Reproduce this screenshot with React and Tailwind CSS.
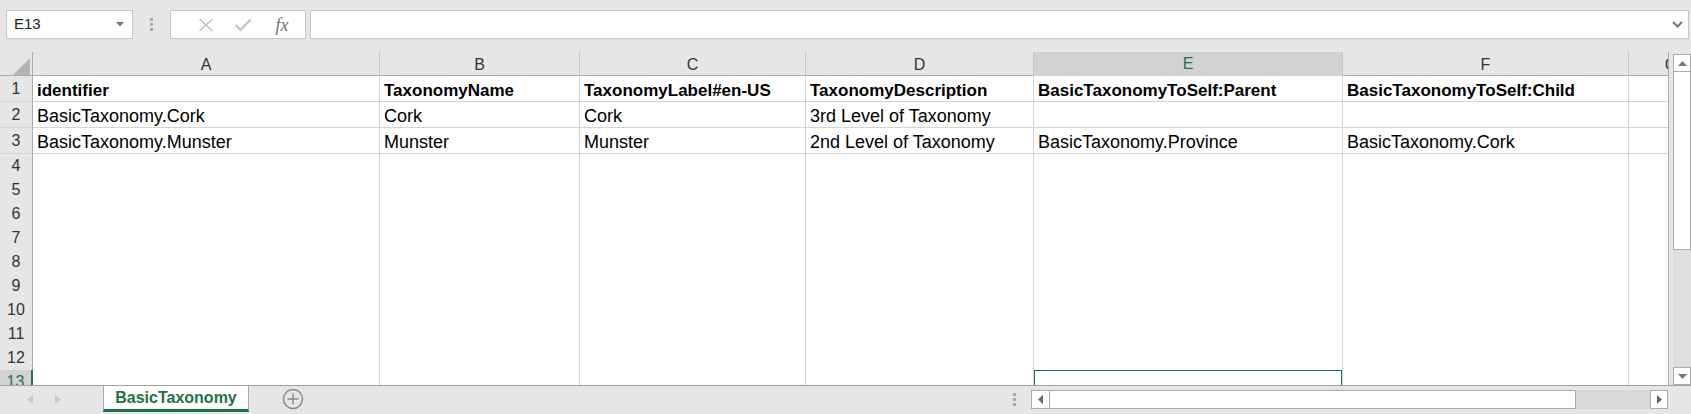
import React from 'react';

const COLS = ['A', 'B', 'C', 'D', 'E', 'F'];

const ROWS = [
  {
    bold: true,
    cells: [
      'identifier',
      'TaxonomyName',
      'TaxonomyLabel#en-US',
      'TaxonomyDescription',
      'BasicTaxonomyToSelf:Parent',
      'BasicTaxonomyToSelf:Child',
    ],
  },
  {
    cells: ['BasicTaxonomy.Cork', 'Cork', 'Cork', '3rd Level of Taxonomy', '', ''],
  },
  {
    cells: [
      'BasicTaxonomy.Munster',
      'Munster',
      'Munster',
      '2nd Level of Taxonomy',
      'BasicTaxonomy.Province',
      'BasicTaxonomy.Cork',
    ],
  },
];

const EMPTY = ['', '', '', '', '', ''];

function FormulaBar() {
  return (
    <div className="h-[52px] flex items-start pt-[10px] pl-[6px]">
      <div className="w-[127px] h-[29px] bg-white border border-[#c6c6c6] flex items-center justify-between pl-[7px] pr-[8px]">
        <span className="text-[15px] text-[#222]">E13</span>
        <svg width="8" height="5" viewBox="0 0 8 5">
          <path d="M0 0 L8 0 L4 4.5 Z" fill="#777" />
        </svg>
      </div>
      <div className="w-[37px] h-[29px] flex flex-col items-center justify-center gap-[2px]">
        <div className="w-[3px] h-[3px] bg-[#a8a8a8]" />
        <div className="w-[3px] h-[3px] bg-[#a8a8a8]" />
        <div className="w-[3px] h-[3px] bg-[#a8a8a8]" />
      </div>
      <div className="w-[136px] h-[29px] bg-white border border-[#c6c6c6] flex items-center">
        <div className="w-[44px] flex justify-end pr-[1px]">
          <svg width="16" height="14" viewBox="0 0 16 14">
            <path d="M1.5 1 L14.5 13 M14.5 1 L1.5 13" stroke="#bdbdbd" strokeWidth="1.4" fill="none" />
          </svg>
        </div>
        <div className="w-[48px] flex justify-center pl-[8px]">
          <svg width="18" height="14" viewBox="0 0 18 14">
            <path d="M1.5 7 L6.5 12 L16.5 1.5" stroke="#c2c2c2" strokeWidth="2.2" fill="none" />
          </svg>
        </div>
        <div className="flex-1 flex justify-center pr-[4px]">
          <span className="font-['Liberation_Serif',serif] italic text-[18px] leading-none text-[#707070]">fx</span>
        </div>
      </div>
      <div className="ml-[4px] w-[1379px] h-[29px] bg-white border border-[#c6c6c6] flex items-center justify-end pr-[5px]">
        <svg width="11" height="7" viewBox="0 0 11 7">
          <path d="M1 1 L5.5 5.5 L10 1" stroke="#777" strokeWidth="2" fill="none" />
        </svg>
      </div>
    </div>
  );
}

function Cell({ children, bold, selected }) {
  return (
    <div
      className={
        'relative border-r border-b border-[#d4d4d4] bg-white px-[4px] pb-[2px] flex items-end whitespace-nowrap overflow-hidden text-black ' +
        (bold ? 'font-bold text-[17px] leading-[17px]' : 'text-[18px] leading-[18px]')
      }
    >
      {children}
      {selected && (
        <div className="absolute -left-[1px] -top-[1px] right-[-1px] -bottom-[2px] border-2 border-[#217346]" />
      )}
    </div>
  );
}

function RowHeader({ n, selected }) {
  return (
    <div
      className={
        'flex items-center justify-center text-[16px] border-b border-[#d4d4d4] ' +
        (selected
          ? 'bg-[#d2d2d2] text-[#217346] border-r-2 border-r-[#217346]'
          : 'bg-[#e6e6e6] text-[#333] border-r border-r-[#ababab]')
      }
    >
      {n}
    </div>
  );
}

function Grid() {
  const rows = [];
  for (let i = 1; i <= 13; i++) {
    const r = ROWS[i - 1] || { cells: EMPTY };
    rows.push(
      <div
        key={i}
        className={
          'grid grid-cols-[33px_347px_200px_226px_228px_309px_286px_40px] ' +
          (i <= 3 ? 'h-[26px]' : 'h-[24px]')
        }
      >
        <RowHeader n={i} selected={i === 13} />
        {r.cells.map((c, j) => (
          <Cell key={j} bold={r.bold} selected={i === 13 && j === 4}>
            {c}
          </Cell>
        ))}
        <Cell />
      </div>
    );
  }

  return (
    <div className="w-[1669px] h-[333px] overflow-hidden border-r border-[#ababab]">
      <div className="grid grid-cols-[33px_347px_200px_226px_228px_309px_286px_40px] h-[24px] bg-[#e6e6e6] border-b border-[#ababab]">
        <div className="relative border-r border-[#ababab]">
          <svg className="absolute right-[2px] bottom-[2px]" width="17" height="17" viewBox="0 0 17 17">
            <path d="M17 0 L17 17 L0 17 Z" fill="#b4b4b4" />
          </svg>
        </div>
        {COLS.map((c) =>
          c === 'E' ? (
            <div
              key={c}
              className="flex items-center justify-center text-[16px] bg-[#d2d2d2] text-[#217346] border-r border-[#c6c6c6] border-b-2 border-b-[#217346] -mb-px"
            >
              {c}
            </div>
          ) : (
            <div key={c} className="flex items-center justify-center text-[16px] text-[#333] border-r border-[#c6c6c6]">
              {c}
            </div>
          )
        )}
        <div className="overflow-hidden">
          <div className="w-[84px] h-full flex items-center justify-center text-[16px] text-[#333]">G</div>
        </div>
      </div>
      {rows}
    </div>
  );
}

function VScroll() {
  return (
    <div className="w-[22px] h-[333px] pl-[4px] pt-[2px] flex flex-col">
      <div className="h-[18px] bg-white border border-[#ababab] flex items-center justify-center">
        <svg width="9" height="5" viewBox="0 0 9 5">
          <path d="M0 5 L9 5 L4.5 0 Z" fill="#777" />
        </svg>
      </div>
      <div className="h-[178px] bg-white border-x border-b border-[#ababab]" />
      <div className="flex-1 bg-[#dedede]" />
      <div className="h-[18px] bg-white border border-[#ababab] flex items-center justify-center">
        <svg width="9" height="5" viewBox="0 0 9 5">
          <path d="M0 0 L9 0 L4.5 5 Z" fill="#777" />
        </svg>
      </div>
    </div>
  );
}

function TabBar() {
  return (
    <div className="h-[29px] border-t border-[#a0a0a0] flex items-start">
      <div className="w-[103px] h-[26px] flex items-center">
        <svg className="ml-[27px]" width="6" height="9" viewBox="0 0 6 9">
          <path d="M6 0 L6 9 L0 4.5 Z" fill="#c8c8c8" />
        </svg>
        <svg className="ml-[22px]" width="6" height="9" viewBox="0 0 6 9">
          <path d="M0 0 L0 9 L6 4.5 Z" fill="#c8c8c8" />
        </svg>
      </div>
      <div className="w-[146px] h-[26px] bg-white border-x border-[#ababab] border-b-[3px] border-b-[#217346] flex items-center justify-center">
        <span className="font-bold text-[16px] text-[#217346]">BasicTaxonomy</span>
      </div>
      <div className="ml-[33px] h-[26px] flex items-center">
        <svg width="22" height="22" viewBox="0 0 22 22">
          <circle cx="11" cy="11" r="9.5" stroke="#8a8a8a" strokeWidth="1.5" fill="none" />
          <path d="M11 5.5 V16.5 M5.5 11 H16.5" stroke="#8a8a8a" strokeWidth="1.5" />
        </svg>
      </div>
      <div className="ml-[709px] h-[26px] flex flex-col items-center justify-center gap-[2px]">
        <div className="w-[3px] h-[3px] bg-[#a8a8a8]" />
        <div className="w-[3px] h-[3px] bg-[#a8a8a8]" />
        <div className="w-[3px] h-[3px] bg-[#a8a8a8]" />
      </div>
      <div className="ml-[15px] mt-[4px] w-[637px] h-[19px] flex">
        <div className="w-[19px] bg-white border border-[#ababab] flex items-center justify-center">
          <svg width="5" height="9" viewBox="0 0 5 9">
            <path d="M5 0 L5 9 L0 4.5 Z" fill="#666" />
          </svg>
        </div>
        <div className="w-[526px] bg-white border-y border-r border-[#ababab]" />
        <div className="flex-1 bg-[#dadada] border-y border-[#dadada]" />
        <div className="w-[18px] bg-white border border-[#ababab] flex items-center justify-center">
          <svg width="5" height="9" viewBox="0 0 5 9">
            <path d="M0 0 L0 9 L5 4.5 Z" fill="#666" />
          </svg>
        </div>
      </div>
    </div>
  );
}

export default function App() {
  return (
    <div className="w-[1691px] h-[414px] overflow-hidden bg-[#e6e6e6] font-['Liberation_Sans',Arial,sans-serif]">
      <FormulaBar />
      <div className="flex">
        <Grid />
        <VScroll />
      </div>
      <TabBar />
    </div>
  );
}
